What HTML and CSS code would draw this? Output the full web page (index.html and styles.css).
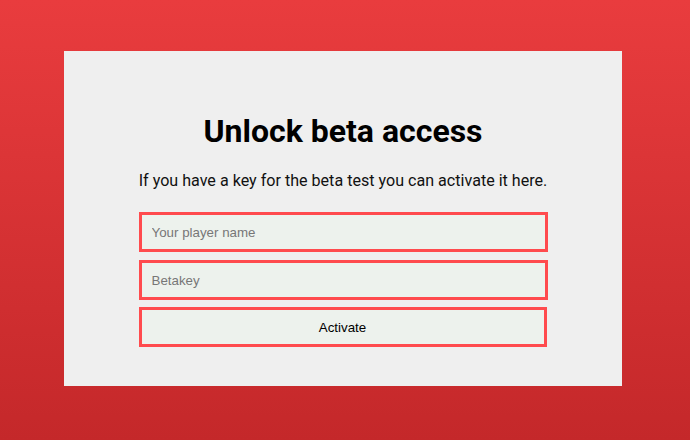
FILE: index.html
```html
<!DOCTYPE html>
<html lang="en">
<head>
<meta charset="utf-8">
<title>Unlock beta access</title>
<link rel="stylesheet" href="styles.css">
</head>
<body>
<main class="card">
  <h1 class="title">Unlock beta access</h1>
  <p class="lead">If you have a key for the beta test you can activate it here.</p>
  <form class="form">
    <input class="field" type="text" placeholder="Your player name">
    <input class="field" type="text" placeholder="Betakey">
    <button class="field button" type="button">Activate</button>
  </form>
</main>
</body>
</html>
```
FILE: styles.css
```css
html, body {
  margin: 0;
  height: 100%;
}
body {
  background: linear-gradient(to bottom, #e93c3e 0%, #c4282a 100%);
  font-family: Roboto, "Liberation Sans", sans-serif;
  display: flex;
  justify-content: flex-start;
  align-items: flex-start;
  padding: 51px 0 0 64px;
  box-sizing: border-box;
}
.card {
  width: 558px;
  height: 335px;
  box-sizing: border-box;
  background: #efefef;
  padding: 61px 74px 0 74px;
  display: flex;
  flex-direction: column;
  align-items: center;
}
.title {
  margin: 0;
  font-size: 32px;
  line-height: 38px;
  font-weight: 700;
  color: #000;
}
.lead {
  margin: 21px 0 0 0;
  font-size: 16.1px;
  line-height: 19px;
  color: #111;
  white-space: nowrap;
}
.form {
  margin-top: 22px;
  width: 409px;
  display: flex;
  flex-direction: column;
  gap: 8px;
}
.field {
  box-sizing: border-box;
  width: 100%;
  height: 40px;
  margin: 0;
  border: 3px solid #ff4b4e;
  background: #edf2ed;
  padding: 0 10px;
  font-family: "Liberation Sans", Arial, sans-serif;
  font-size: 13.33px;
  color: #222;
  outline: none;
}
.field::placeholder {
  color: #777;
}
.button {
  width: 408px;
  margin-top: -1px;
  text-align: center;
  color: #000;
  cursor: pointer;
}
```
